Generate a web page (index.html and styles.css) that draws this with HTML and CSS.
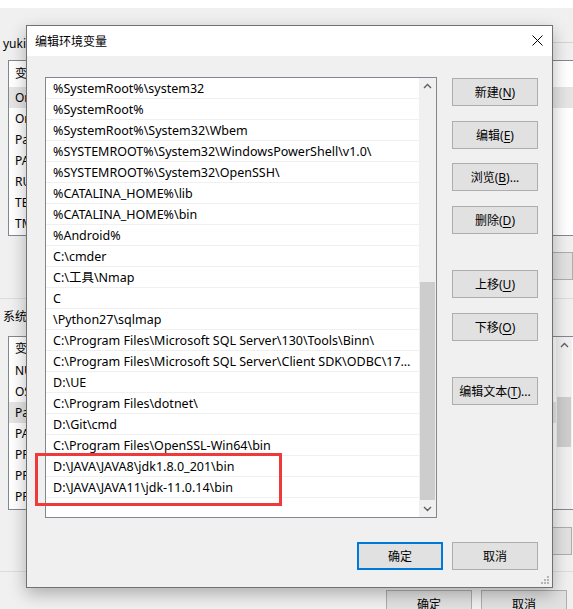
FILE: index.html
```html
<!DOCTYPE html>
<html lang="zh-CN">

<head>
    <meta charset="UTF-8">
    <meta name="viewport" content="width=device-width, initial-scale=1.0">
    <title>编辑环境变量</title>
    <link rel="stylesheet" href="styles.css">
</head>

<body>
    <!-- 背后的“环境变量”窗口 -->
    <div class="env-window">
        <div class="top-strip"></div>

        <div class="section-head">
            <span class="section-label">yuki</span>
            <span class="head-rule"></span>
        </div>
        <div class="var-list user-list">
            <div class="var-row var-head">变量</div>
            <div class="var-row selected">OneDrive</div>
            <div class="var-row">OneDrive</div>
            <div class="var-row">Path</div>
            <div class="var-row">PATH</div>
            <div class="var-row">RUST</div>
            <div class="var-row">TEMP</div>
            <div class="var-row">TMP</div>
        </div>
        <div class="list-buttons">
            <button class="win-btn">新建(<u>N</u>)...</button>
            <button class="win-btn">编辑(<u>E</u>)...</button>
            <button class="win-btn">删除(<u>D</u>)</button>
        </div>

        <div class="rule"></div>

        <div class="section-head sys-head">
            <span class="section-label">系统变量</span>
        </div>
        <div class="var-list sys-list">
            <div class="var-rows">
                <div class="var-row var-head short">变量</div>
                <div class="var-row">NUMBER</div>
                <div class="var-row">OS</div>
                <div class="var-row selected">Path</div>
                <div class="var-row">PATH</div>
                <div class="var-row">PROC</div>
                <div class="var-row">PROC</div>
                <div class="var-row">PROC</div>
            </div>
            <div class="scrollbar small">
                <svg class="arrow" width="17" height="17" viewBox="0 0 17 17"><path d="M5 10 L8.5 6.5 L12 10" fill="none" stroke="#606060" stroke-width="1.4"/></svg>
                <div class="track"><div class="thumb sys-thumb"></div></div>
            </div>
        </div>
        <div class="list-buttons sys-buttons">
            <button class="win-btn">新建(<u>W</u>)...</button>
            <button class="win-btn">编辑(<u>I</u>)...</button>
            <button class="win-btn">删除(<u>L</u>)</button>
        </div>

        <div class="rule footer-rule"></div>
        <div class="footer-buttons">
            <button class="win-btn">确定</button>
            <button class="win-btn">取消</button>
        </div>
    </div>

    <!-- 编辑环境变量对话框 -->
    <div class="dialog">
        <div class="dialog-title">
            <span>编辑环境变量</span>
            <span class="close">
                <svg width="11" height="11" viewBox="0 0 11 11"><path d="M0.5 0.5 L10.5 10.5 M10.5 0.5 L0.5 10.5" stroke="#000" stroke-width="1"/></svg>
            </span>
        </div>

        <div class="dialog-main">
            <div class="path-list">
                <div class="path-rows">
                    <div class="path-row">%SystemRoot%\system32</div>
                    <div class="path-row">%SystemRoot%</div>
                    <div class="path-row">%SystemRoot%\System32\Wbem</div>
                    <div class="path-row">%SYSTEMROOT%\System32\WindowsPowerShell\v1.0\</div>
                    <div class="path-row">%SYSTEMROOT%\System32\OpenSSH\</div>
                    <div class="path-row">%CATALINA_HOME%\lib</div>
                    <div class="path-row">%CATALINA_HOME%\bin</div>
                    <div class="path-row">%Android%</div>
                    <div class="path-row">C:\cmder</div>
                    <div class="path-row">C:\工具\Nmap</div>
                    <div class="path-row">C</div>
                    <div class="path-row">\Python27\sqlmap</div>
                    <div class="path-row">C:\Program Files\Microsoft SQL Server\130\Tools\Binn\</div>
                    <div class="path-row">C:\Program Files\Microsoft SQL Server\Client SDK\ODBC\170\Tools\Binn\</div>
                    <div class="path-row">D:\UE</div>
                    <div class="path-row">C:\Program Files\dotnet\</div>
                    <div class="path-row">D:\Git\cmd</div>
                    <div class="path-row">C:\Program Files\OpenSSL-Win64\bin</div>
                    <div class="path-row">D:\JAVA\JAVA8\jdk1.8.0_201\bin</div>
                    <div class="path-row">D:\JAVA\JAVA11\jdk-11.0.14\bin</div>
                </div>
                <div class="scrollbar">
                    <svg class="arrow" width="17" height="17" viewBox="0 0 17 17"><path d="M5 10 L8.5 6.5 L12 10" fill="none" stroke="#606060" stroke-width="1.4"/></svg>
                    <div class="track"><div class="thumb"></div></div>
                    <svg class="arrow" width="17" height="17" viewBox="0 0 17 17"><path d="M5 7 L8.5 10.5 L12 7" fill="none" stroke="#606060" stroke-width="1.4"/></svg>
                </div>
            </div>

            <div class="side-buttons">
                <button class="win-btn">新建(<u>N</u>)</button>
                <button class="win-btn">编辑(<u>E</u>)</button>
                <button class="win-btn">浏览(<u>B</u>)...</button>
                <button class="win-btn">删除(<u>D</u>)</button>
                <button class="win-btn group-start">上移(<u>U</u>)</button>
                <button class="win-btn">下移(<u>O</u>)</button>
                <button class="win-btn group-start">编辑文本(<u>T</u>)...</button>
            </div>
        </div>

        <div class="dialog-foot">
            <button class="win-btn default">确定</button>
            <button class="win-btn">取消</button>
        </div>

        <!-- 右下角的拖动手柄 -->
        <svg class="grip" width="9" height="9" viewBox="0 0 9 9">
            <rect x="7" y="1" width="2" height="2" fill="#b4b4b4"/>
            <rect x="4" y="4" width="2" height="2" fill="#b4b4b4"/>
            <rect x="7" y="4" width="2" height="2" fill="#b4b4b4"/>
            <rect x="1" y="7" width="2" height="2" fill="#b4b4b4"/>
            <rect x="4" y="7" width="2" height="2" fill="#b4b4b4"/>
            <rect x="7" y="7" width="2" height="2" fill="#b4b4b4"/>
        </svg>
    </div>

    <!-- 红框标注 -->
    <div class="mark-box"></div>
</body>

</html>
```

FILE: styles.css
```css
* {
    box-sizing: border-box;
}

html,
body {
    margin: 0;
}

body {
    position: relative;
    width: 573px;
    height: 609px;
    overflow: hidden;
    background-color: #f0f0f0;
    font-family: "Noto Sans", "Noto Sans CJK SC", sans-serif;
    font-size: 12px;
    color: #000;
}

u {
    text-decoration-thickness: 1px;
    text-underline-offset: 2px;
}

/* ---- 背后的窗口 ---- */
.env-window {
    width: 573px;
}

.top-strip {
    height: 8px;
    background-color: #fff;
}

.section-head {
    display: flex;
    align-items: flex-start;
    height: 16px;
    margin-top: 28px;
    padding-left: 3px;
    line-height: 16px;
    white-space: nowrap;
}

.head-rule {
    flex: 1;
    margin: 6px 0 0 200px;
    border-top: 1px solid #d4d4d4;
}

.var-list {
    display: flex;
    width: 566px;
    margin: 8px 0 0 8px;
    border: 1px solid #828790;
    background-color: #fff;
}

.user-list {
    flex-direction: column;
    height: 176px;
}

.var-rows {
    flex: 1;
}

.var-row {
    height: 21px;
    line-height: 21px;
    padding-left: 6px;
    white-space: nowrap;
}

.var-row.var-head {
    height: 26px;
    line-height: 26px;
}

.var-row.var-head.short {
    height: 23px;
    line-height: 23px;
}

.var-row.selected {
    background-color: #e5e5e5;
}

.list-buttons {
    display: flex;
    justify-content: flex-end;
    gap: 9px;
    margin-top: 16px;
}

.rule {
    height: 1px;
    margin-top: 18px;
    background-color: #dcdcdc;
}

.sys-head {
    margin-top: 10px;
}

.sys-list {
    height: 174px;
    margin-top: 11px;
}

.sys-buttons {
    margin-top: 17px;
    padding-right: 1px;
}

.footer-rule {
    margin-top: 16px;
}

.footer-buttons {
    display: flex;
    justify-content: flex-end;
    gap: 9px;
    margin-top: 18px;
    padding-right: 6px;
}

/* ---- 按钮 ---- */
.win-btn {
    width: 86px;
    height: 28px;
    padding: 0;
    border: 1px solid #adadad;
    background-color: #e1e1e1;
    font-family: inherit;
    font-size: 12px;
    color: #000;
    white-space: nowrap;
}

.win-btn.default {
    border: 2px solid #0078d7;
}

/* ---- 滚动条 ---- */
.scrollbar {
    display: flex;
    flex-direction: column;
    width: 17px;
    background-color: #f0f0f0;
}

.scrollbar.small {
    width: 16px;
    margin-right: 1px;
}

.scrollbar .arrow {
    flex: none;
    display: block;
}

.track {
    flex: 1;
    display: flex;
    flex-direction: column;
    justify-content: flex-end;
    padding: 0 1px;
}

.thumb {
    height: 218px;
    background-color: #cdcdcd;
}

.sys-thumb {
    height: 50px;
    margin-bottom: 62px;
}

/* ---- 对话框 ---- */
.dialog {
    position: absolute;
    left: 26px;
    top: 25px;
    width: 527px;
    height: 563px;
    display: flex;
    flex-direction: column;
    border: 1px solid #717171;
    background-color: #f0f0f0;
    box-shadow: 0 6px 16px rgba(0, 0, 0, 0.28);
}

.dialog-title {
    display: flex;
    align-items: center;
    justify-content: space-between;
    height: 30px;
    padding-left: 8px;
    padding-bottom: 1px;
    background-color: #fff;
}

.close {
    display: flex;
    align-items: center;
    justify-content: center;
    width: 30px;
    height: 30px;
}

.dialog-main {
    display: flex;
    gap: 15px;
    padding: 21px 0 0 18px;
}

.path-list {
    display: flex;
    width: 392px;
    height: 441px;
    border: 1px solid #828790;
    background-color: #fff;
}

.path-rows {
    flex: 1;
    min-width: 0;
}

.path-row {
    height: 21px;
    line-height: 22px;
    padding: 0 6px 0 7px;
    border-bottom: 1px solid #f0f0f0;
    font-size: 12.5px;
    white-space: nowrap;
    overflow: hidden;
    text-overflow: ellipsis;
}

.side-buttons {
    display: flex;
    flex-direction: column;
    gap: 15px;
    padding-top: 1px;
}

.side-buttons .win-btn:nth-child(3) {
    margin-top: -1px;
}

.side-buttons .group-start {
    margin-top: 21px;
}

.dialog-foot {
    display: flex;
    justify-content: flex-end;
    gap: 9px;
    margin-top: 24px;
    padding-right: 14px;
}

.grip {
    position: absolute;
    right: 3px;
    bottom: 3px;
}

/* ---- 标注框 ---- */
.mark-box {
    position: absolute;
    left: 35px;
    top: 453px;
    width: 247px;
    height: 53px;
    border: 3px solid #f03a3a;
}
```
